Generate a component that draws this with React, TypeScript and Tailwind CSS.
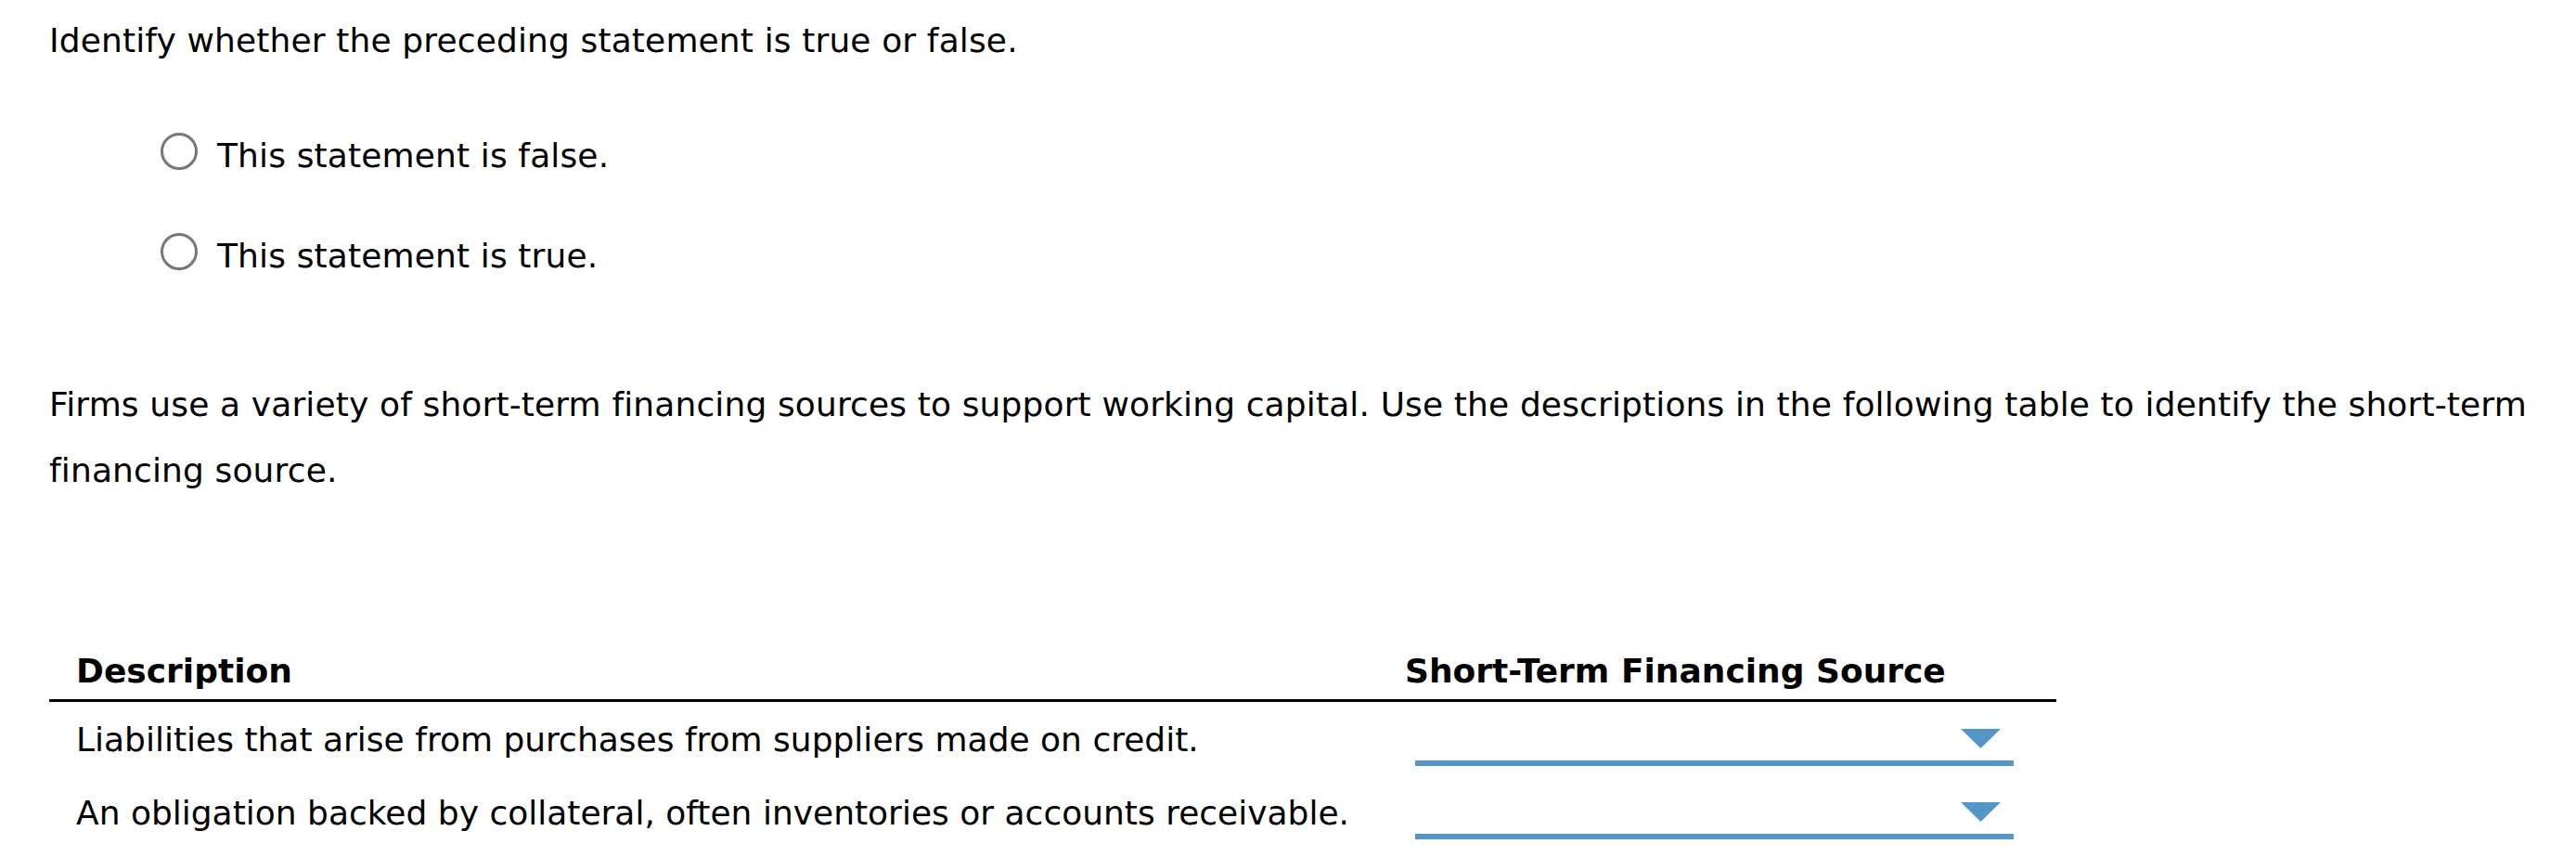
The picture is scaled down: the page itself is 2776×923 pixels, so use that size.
const rows = [
  "Liabilities that arise from purchases from suppliers made on credit.",
  "An obligation backed by collateral, often inventories or accounts receivable.",
];

function Radio({ label }: { label: string }) {
  return (
    <label className="flex items-start">
      <span className="mt-[-3px] h-[40px] w-[40px] shrink-0 rounded-full border-[3px] border-[#777777] bg-white" />
      <span className="ml-[21px]">{label}</span>
    </label>
  );
}

function Dropdown() {
  return (
    <div className="relative ml-[11px] mt-[3px] h-[47px] w-[645px] border-b-[6px] border-[#5596c9]">
      <svg
        className="absolute right-[14px] top-[7px]"
        width="43"
        height="21"
        viewBox="0 0 43 21"
      >
        <polygon points="0,0 43,0 21.5,21" fill="#5596c9" />
      </svg>
    </div>
  );
}

export default function App() {
  return (
    <div
      className="min-h-screen bg-white pl-[53px] text-[36px] leading-[44px] tracking-[0.13px] text-black"
      style={{ fontFamily: "'DejaVu Sans', Verdana, sans-serif" }}
    >
      <p className="pt-[22px]">Identify whether the preceding statement is true or false.</p>

      <div className="mt-[80px] flex flex-col gap-[64px] pl-[120px]">
        <Radio label="This statement is false." />
        <Radio label="This statement is true." />
      </div>

      <p className="mt-[102px] leading-[71px]">
        Firms use a variety of short-term financing sources to support working capital. Use the descriptions in the
        following table to identify the short-term financing source.
      </p>

      <div className="mt-[159px] w-[2163px] tracking-normal">
        <div className="grid grid-cols-[1461px_702px] border-b-[3px] border-black pb-[8px] font-bold">
          <div className="pl-[29px]">Description</div>
          <div>Short-Term Financing Source</div>
        </div>
        {rows.map((r) => (
          <div key={r} className="grid h-[79px] grid-cols-[1461px_702px] items-start pt-[19px]">
            <div className="pl-[29px]">{r}</div>
            <Dropdown />
          </div>
        ))}
      </div>
    </div>
  );
}
